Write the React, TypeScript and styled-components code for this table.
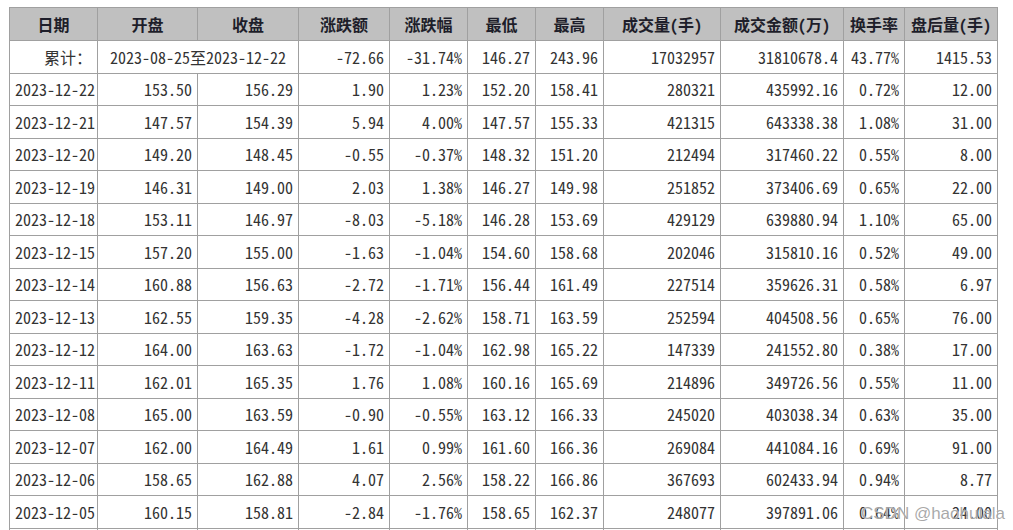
import React from "react";
import styled, { createGlobalStyle } from "styled-components";

const GlobalStyle = createGlobalStyle`
  html, body {
    margin: 0;
    padding: 0;
    background: #ffffff;
    overflow: hidden;
  }
`;

const FONT = `"Noto Sans Mono CJK SC", "Liberation Mono", "Noto Sans CJK SC", monospace`;

const widths = [88, 100, 101, 91, 78, 68, 68, 117, 123, 61, 93];
const headers = [
  "日期",
  "开盘",
  "收盘",
  "涨跌额",
  "涨跌幅",
  "最低",
  "最高",
  "成交量(手)",
  "成交金额(万)",
  "换手率",
  "盘后量(手)",
];

const rows: string[][] = [
  ["2023-12-22", "153.50", "156.29", "1.90", "1.23%", "152.20", "158.41", "280321", "435992.16", "0.72%", "12.00"],
  ["2023-12-21", "147.57", "154.39", "5.94", "4.00%", "147.57", "155.33", "421315", "643338.38", "1.08%", "31.00"],
  ["2023-12-20", "149.20", "148.45", "-0.55", "-0.37%", "148.32", "151.20", "212494", "317460.22", "0.55%", "8.00"],
  ["2023-12-19", "146.31", "149.00", "2.03", "1.38%", "146.27", "149.98", "251852", "373406.69", "0.65%", "22.00"],
  ["2023-12-18", "153.11", "146.97", "-8.03", "-5.18%", "146.28", "153.69", "429129", "639880.94", "1.10%", "65.00"],
  ["2023-12-15", "157.20", "155.00", "-1.63", "-1.04%", "154.60", "158.68", "202046", "315810.16", "0.52%", "49.00"],
  ["2023-12-14", "160.88", "156.63", "-2.72", "-1.71%", "156.44", "161.49", "227514", "359626.31", "0.58%", "6.97"],
  ["2023-12-13", "162.55", "159.35", "-4.28", "-2.62%", "158.71", "163.59", "252594", "404508.56", "0.65%", "76.00"],
  ["2023-12-12", "164.00", "163.63", "-1.72", "-1.04%", "162.98", "165.22", "147339", "241552.80", "0.38%", "17.00"],
  ["2023-12-11", "162.01", "165.35", "1.76", "1.08%", "160.16", "165.69", "214896", "349726.56", "0.55%", "11.00"],
  ["2023-12-08", "165.00", "163.59", "-0.90", "-0.55%", "163.12", "166.33", "245020", "403038.34", "0.63%", "35.00"],
  ["2023-12-07", "162.00", "164.49", "1.61", "0.99%", "161.60", "166.36", "269084", "441084.16", "0.69%", "91.00"],
  ["2023-12-06", "158.65", "162.88", "4.07", "2.56%", "158.22", "166.86", "367693", "602433.94", "0.94%", "8.77"],
  ["2023-12-05", "160.15", "158.81", "-2.84", "-1.76%", "158.65", "162.37", "248077", "397891.06", "0.64%", "24.00"],
];

const Page = styled.div`
  position: relative;
  height: 530px;
  padding: 7px 0 0 9px;
  box-sizing: border-box;
  overflow: hidden;
`;

const Table = styled.table`
  border-collapse: collapse;
  table-layout: fixed;
  width: 988px;
  font-family: ${FONT};
  font-size: 16px;
  color: #333;
`;

const HeadCell = styled.th`
  height: 32px;
  padding: 0;
  background: #c0c0c0;
  border: 1px solid #a0a0a0;
  font-weight: bold;
  text-align: center;
  color: #1e1e2a;
`;

const Cell = styled.td<{ $align?: "left" | "right" | "center" }>`
  height: 31.5px;
  padding: 0 5px;
  border: 1px solid #a0a0a0;
  text-align: ${(p) => p.$align ?? "right"};
  white-space: nowrap;
  overflow: hidden;
`;

const Watermark = styled.div`
  position: absolute;
  left: 861px;
  top: 504px;
  font-family: "Liberation Sans", Arial, sans-serif;
  font-size: 17px;
  color: rgba(140, 140, 140, 0.75);
  white-space: nowrap;
  text-shadow: 0 0 1px #fff;
`;

export default function App() {
  return (
    <>
      <GlobalStyle />
      <Page>
        <Table>
          <colgroup>
            {widths.map((w, i) => (
              <col key={i} style={{ width: w }} />
            ))}
          </colgroup>
          <thead>
            <tr>
              {headers.map((h) => (
                <HeadCell key={h}>{h}</HeadCell>
              ))}
            </tr>
          </thead>
          <tbody>
            <tr>
              <Cell>累计：</Cell>
              <Cell colSpan={2} $align="center">
                2023-08-25至2023-12-22
              </Cell>
              <Cell>-72.66</Cell>
              <Cell>-31.74%</Cell>
              <Cell>146.27</Cell>
              <Cell>243.96</Cell>
              <Cell>17032957</Cell>
              <Cell>31810678.4</Cell>
              <Cell>43.77%</Cell>
              <Cell>1415.53</Cell>
            </tr>
            {rows.map((r) => (
              <tr key={r[0]}>
                {r.map((v, i) => (
                  <Cell key={i} $align={i === 0 ? "left" : "right"}>
                    {v}
                  </Cell>
                ))}
              </tr>
            ))}
            <tr>
              {widths.map((_, i) => (
                <Cell key={i} />
              ))}
            </tr>
          </tbody>
        </Table>
        <Watermark>CSDN @haohulala</Watermark>
      </Page>
    </>
  );
}
